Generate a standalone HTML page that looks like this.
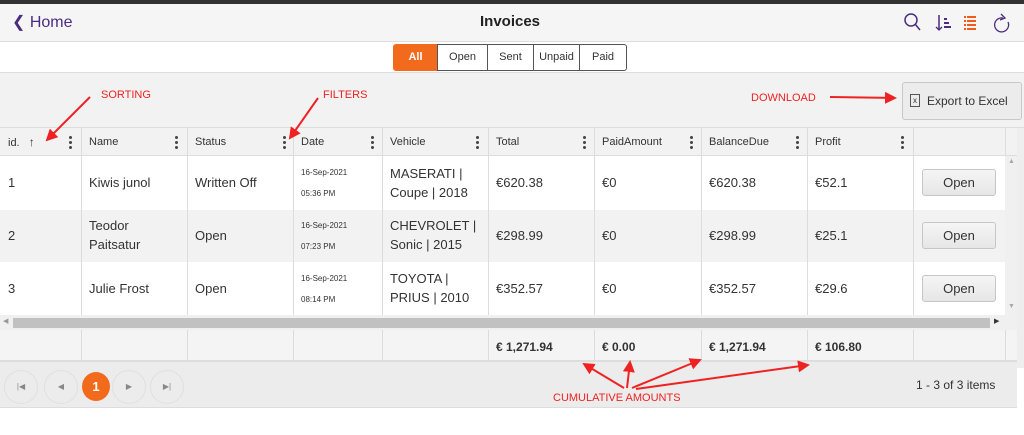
<!DOCTYPE html>
<html><head><meta charset="utf-8"><style>
*{margin:0;padding:0;box-sizing:border-box}
body{width:1024px;height:435px;overflow:hidden;background:#fff;font-family:"Liberation Sans",Arial,sans-serif;position:relative;color:#333}
.a{position:absolute}
.vl{position:absolute;width:1px;background:#dcdcdc}
.hc{position:absolute;top:128px;height:28px;font-size:11px;color:#333;line-height:28px;padding-left:8px}
.dots{position:absolute;top:136px;width:3px;height:13px}
.dots i{display:block;width:3px;height:3px;background:#444;border-radius:50%;margin-bottom:2px}
.c{position:absolute;font-size:13px;color:#333;padding-left:8px;line-height:19px}
.btn{position:absolute;left:922px;width:74px;height:27px;border:1px solid #c6c6c6;border-radius:3px;background:linear-gradient(#f5f5f5,#e6e6e6);font-size:13px;text-align:center;line-height:25px;color:#333}
.tab{position:absolute;top:44px;height:27px;border:1px solid #555;font-size:11px;line-height:25px;text-align:center;color:#333;background:#fff}
.pg{position:absolute;top:370px;width:34px;height:34px;border:1px solid #e0e0e0;border-radius:50%;background:#ececec;font-size:8px;color:#888;text-align:center;line-height:32px}
.ft{position:absolute;top:340px;font-size:12px;font-weight:bold;color:#333}
.red{position:absolute;color:#e22;font-size:11px}
</style></head><body>
<div class="a" style="left:0;top:0;width:1024px;height:4px;background:#333"></div>
<div class="a" style="left:0;top:4px;width:1024px;height:38px;background:#f5f5f5;border-bottom:1px solid #ddd"></div>
<div class="a" style="left:12px;top:12px;font-size:16px;color:#4b2c7e">&#10094; Home</div>
<div class="a" style="left:480px;top:13px;font-size:15px;font-weight:bold;color:#222">Invoices</div>
<svg class="a" style="left:900px;top:10px" width="120" height="26">
<circle cx="11" cy="10" r="6" fill="none" stroke="#4b2c7e" stroke-width="1.5"/><line x1="15" y1="14" x2="20" y2="20" stroke="#4b2c7e" stroke-width="1.5"/>
<line x1="39" y1="5" x2="39" y2="20" stroke="#4b2c7e" stroke-width="1.5"/><path d="M36 17 L39 20 L42 17" fill="none" stroke="#4b2c7e" stroke-width="1.3"/>
<rect x="44" y="8" width="3" height="2" fill="#4b2c7e"/><rect x="44" y="12" width="5" height="2" fill="#4b2c7e"/><rect x="44" y="16" width="7" height="2" fill="#4b2c7e"/>
<g fill="#f05a1a"><rect x="64" y="6" width="2" height="2"/><rect x="67" y="6" width="9" height="2"/><rect x="64" y="10" width="2" height="2"/><rect x="67" y="10" width="9" height="2"/><rect x="64" y="14" width="2" height="2"/><rect x="67" y="14" width="9" height="2"/><rect x="64" y="18" width="2" height="2"/><rect x="67" y="18" width="9" height="2"/></g>
<path d="M103 8 A7 7 0 1 0 108 12" fill="none" stroke="#4b2c7e" stroke-width="1.3"/><path d="M101 4 L105 8 L100 10" fill="none" stroke="#4b2c7e" stroke-width="1.3"/>
</svg>
<div class="tab" style="left:393px;width:45px;background:#f26a1b;border-color:#f26a1b;color:#fff;font-weight:bold;border-radius:3px 0 0 3px">All</div>
<div class="tab" style="left:437px;width:51px">Open</div>
<div class="tab" style="left:487px;width:47px">Sent</div>
<div class="tab" style="left:533px;width:47px">Unpaid</div>
<div class="tab" style="left:579px;width:48px;border-radius:0 3px 3px 0">Paid</div>
<div class="a" style="left:0;top:72px;width:1024px;height:56px;background:#f2f2f2;border-top:1px solid #ddd;border-bottom:1px solid #ddd"></div>
<div class="a" style="left:902px;top:82px;width:120px;height:38px;border:1px solid #c8c8c8;border-radius:3px;background:#ececec;font-size:12px;line-height:36px;padding-left:24px;color:#333">Export to Excel</div>
<div class="a" style="left:910px;top:94px;width:10px;height:13px;border:1px solid #555;font-size:8px;line-height:11px;text-align:center">x</div>
<div class="a" style="left:0;top:128px;width:1024px;height:28px;background:#f2f2f2;border-bottom:1px solid #ddd"></div>
<div class="a" style="left:0;top:156px;width:1005px;height:54px;background:#fff"></div>
<div class="a" style="left:0;top:210px;width:1005px;height:52px;background:#f2f2f2"></div>
<div class="a" style="left:0;top:262px;width:1005px;height:53px;background:#fff"></div>
<div class="a" style="left:1005px;top:156px;width:12px;height:159px;background:#f0f0f0"></div>
<div class="a" style="left:1017px;top:128px;width:7px;height:240px;background:#eee"></div>
<div class="a" style="left:1008px;top:158px;font-size:7px;color:#aaa">▲</div>
<div class="a" style="left:1008px;top:303px;font-size:7px;color:#aaa">▼</div>
<div class="a" style="left:0;top:315px;width:1017px;height:15px;background:#f0f0f0"></div>
<div class="a" style="left:13px;top:318px;width:977px;height:10px;background:#c1c1c1"></div>
<div class="a" style="left:3px;top:317px;font-size:7px;color:#999">◀</div>
<div class="a" style="left:994px;top:317px;font-size:7px;color:#333">▶</div>
<div class="a" style="left:0;top:330px;width:1017px;height:32px;background:#f4f4f4;border-bottom:2px solid #ddd"></div>
<div class="a" style="left:0;top:362px;width:1017px;height:46px;background:#ececec;border-bottom:1px solid #ddd"></div>
<!-- vertical lines -->
<div class="vl" style="left:81px;top:128px;height:187px"></div><div class="vl" style="left:187px;top:128px;height:187px"></div><div class="vl" style="left:293px;top:128px;height:187px"></div><div class="vl" style="left:382px;top:128px;height:187px"></div><div class="vl" style="left:488px;top:128px;height:187px"></div><div class="vl" style="left:594px;top:128px;height:187px"></div><div class="vl" style="left:701px;top:128px;height:187px"></div><div class="vl" style="left:807px;top:128px;height:187px"></div><div class="vl" style="left:913px;top:128px;height:187px"></div><div class="vl" style="left:1005px;top:128px;height:28px"></div>
<div class="vl" style="left:81px;top:330px;height:32px"></div><div class="vl" style="left:187px;top:330px;height:32px"></div><div class="vl" style="left:293px;top:330px;height:32px"></div><div class="vl" style="left:382px;top:330px;height:32px"></div><div class="vl" style="left:488px;top:330px;height:32px"></div><div class="vl" style="left:594px;top:330px;height:32px"></div><div class="vl" style="left:701px;top:330px;height:32px"></div><div class="vl" style="left:807px;top:330px;height:32px"></div><div class="vl" style="left:913px;top:330px;height:32px"></div><div class="vl" style="left:1005px;top:330px;height:32px"></div>
<div class="hc" style="left:0">id. &nbsp;&nbsp;<b style="font-size:12px">↑</b></div><div class="hc" style="left:81px">Name</div><div class="hc" style="left:187px">Status</div><div class="hc" style="left:293px">Date</div><div class="hc" style="left:382px">Vehicle</div><div class="hc" style="left:488px">Total</div><div class="hc" style="left:594px">PaidAmount</div><div class="hc" style="left:701px">BalanceDue</div><div class="hc" style="left:807px">Profit</div>
<div class="dots" style="left:69px"><i></i><i></i><i></i></div><div class="dots" style="left:175px"><i></i><i></i><i></i></div><div class="dots" style="left:283px"><i></i><i></i><i></i></div><div class="dots" style="left:371px"><i></i><i></i><i></i></div><div class="dots" style="left:476px"><i></i><i></i><i></i></div><div class="dots" style="left:583px"><i></i><i></i><i></i></div><div class="dots" style="left:690px"><i></i><i></i><i></i></div><div class="dots" style="left:796px"><i></i><i></i><i></i></div><div class="dots" style="left:901px"><i></i><i></i><i></i></div>
<!-- row1 -->
<div class="c" style="left:0;top:173px">1</div><div class="c" style="left:81px;top:173px">Kiwis junol</div><div class="c" style="left:187px;top:173px">Written Off</div>
<div class="c" style="left:293px;top:162px;font-size:8px;line-height:21px">16-Sep-2021<br>05:36 PM</div>
<div class="c" style="left:382px;top:164px">MASERATI |<br>Coupe | 2018</div>
<div class="c" style="left:488px;top:173px">€620.38</div><div class="c" style="left:594px;top:173px">€0</div><div class="c" style="left:701px;top:173px">€620.38</div><div class="c" style="left:807px;top:173px">€52.1</div>
<div class="btn" style="top:169px">Open</div>
<!-- row2 -->
<div class="c" style="left:0;top:226px">2</div><div class="c" style="left:81px;top:216px">Teodor<br>Paitsatur</div><div class="c" style="left:187px;top:226px">Open</div>
<div class="c" style="left:293px;top:215px;font-size:8px;line-height:21px">16-Sep-2021<br>07:23 PM</div>
<div class="c" style="left:382px;top:216px">CHEVROLET |<br>Sonic | 2015</div>
<div class="c" style="left:488px;top:226px">€298.99</div><div class="c" style="left:594px;top:226px">€0</div><div class="c" style="left:701px;top:226px">€298.99</div><div class="c" style="left:807px;top:226px">€25.1</div>
<div class="btn" style="top:222px">Open</div>
<!-- row3 -->
<div class="c" style="left:0;top:279px">3</div><div class="c" style="left:81px;top:279px">Julie Frost</div><div class="c" style="left:187px;top:279px">Open</div>
<div class="c" style="left:293px;top:268px;font-size:8px;line-height:21px">16-Sep-2021<br>08:14 PM</div>
<div class="c" style="left:382px;top:269px">TOYOTA |<br>PRIUS | 2010</div>
<div class="c" style="left:488px;top:279px">€352.57</div><div class="c" style="left:594px;top:279px">€0</div><div class="c" style="left:701px;top:279px">€352.57</div><div class="c" style="left:807px;top:279px">€29.6</div>
<div class="btn" style="top:275px">Open</div>
<!-- footer -->
<div class="ft" style="left:496px">€ 1,271.94</div><div class="ft" style="left:602px">€ 0.00</div><div class="ft" style="left:709px">€ 1,271.94</div><div class="ft" style="left:815px">€ 106.80</div>
<div class="pg" style="left:4px">|◀</div><div class="pg" style="left:44px">◀</div>
<div class="a" style="left:82px;top:372px;width:28px;height:29px;border-radius:50%;background:#f26a1b;color:#fff;font-size:13px;font-weight:bold;text-align:center;line-height:29px">1</div>
<div class="pg" style="left:112px">▶</div><div class="pg" style="left:150px">▶|</div>
<div class="a" style="left:916px;top:378px;font-size:12px;color:#333">1 - 3 of 3 items</div>
<!-- annotations -->
<div class="red" style="left:101px;top:89px">SORTING</div>
<div class="red" style="left:323px;top:89px">FILTERS</div>
<div class="red" style="left:751px;top:92px">DOWNLOAD</div>
<div class="red" style="left:553px;top:392px">CUMULATIVE AMOUNTS</div>
<svg class="a" style="left:0;top:0" width="1024" height="435">
<defs><marker id="m" markerWidth="6" markerHeight="6" refX="5" refY="3" orient="auto"><path d="M0 0 L6 3 L0 6 Z" fill="#e22"/></marker></defs>
<g stroke="#e22" stroke-width="2" marker-end="url(#m)">
<line x1="90" y1="97" x2="47" y2="140"/>
<line x1="318" y1="98" x2="290" y2="138"/>
<line x1="830" y1="97" x2="895" y2="98"/>
<line x1="624" y1="388" x2="584" y2="364"/>
<line x1="627" y1="388" x2="630" y2="362"/>
<line x1="632" y1="388" x2="700" y2="360"/>
<line x1="636" y1="389" x2="808" y2="365"/>
</g></svg>
</body></html>
